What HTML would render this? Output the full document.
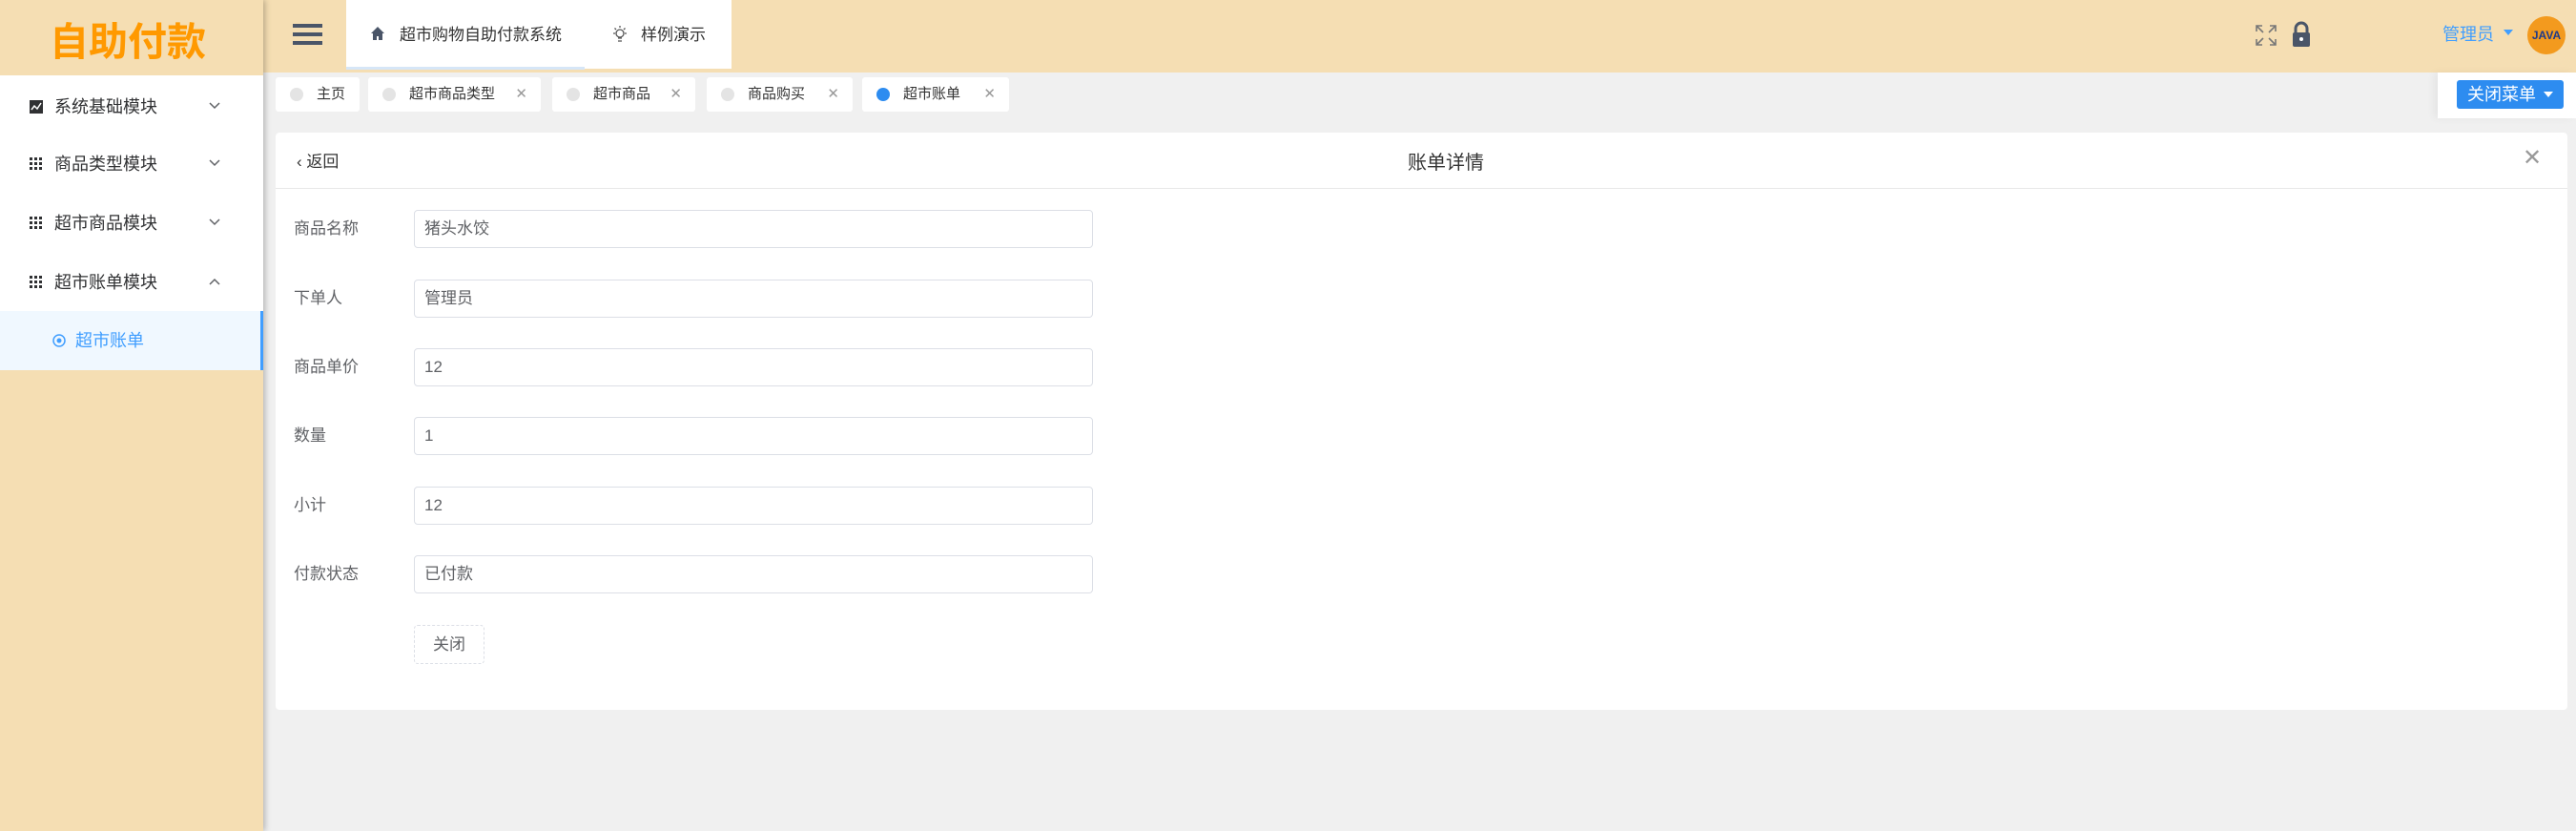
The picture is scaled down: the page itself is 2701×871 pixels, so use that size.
<!DOCTYPE html>
<html><head><meta charset="utf-8"><style>
*{margin:0;padding:0;box-sizing:border-box}
body{width:2701px;height:871px;background:#f0f0f0;font-family:"Liberation Sans","Noto Sans CJK SC",sans-serif;position:relative;overflow:hidden;color:#333}
.abs{position:absolute}
#hdr{left:0;top:0;width:2701px;height:76px;background:#f5deb3}
#side{left:0;top:0;width:276px;height:871px;background:#f5deb3;box-shadow:2px 0 6px rgba(0,0,0,.25);z-index:3}
.logo{left:52px;top:10px;font-size:41px;font-weight:bold;color:#ff9900;letter-spacing:0px;font-family:"WenQuanYi Zen Hei","Noto Sans CJK SC",sans-serif}
.menu{left:0;top:79px;width:276px;height:309px;background:#fff}
.mi{position:absolute;left:0;width:276px;height:62px;font-size:18px;color:#303133;line-height:62px;padding-left:57px}
.mi .ic{position:absolute;left:31px;top:24px;width:14px;height:14px}
.mi .ar{position:absolute;left:219px;top:26px;width:12px;height:8px}
.tabs{left:289px;top:81px;height:36px;background:#fff;border-radius:3px;font-size:15px;color:#333;line-height:36px}
.dot{position:absolute;left:15px;top:11px;width:14px;height:14px;border-radius:50%;background:#e4e4e4}
.x{position:absolute;right:14px;color:#999;font-size:15px}
.card{left:289px;top:139px;width:2403px;height:605px;background:#fff;border-radius:4px}
.lbl{position:absolute;left:19px;font-size:17px;color:#606266;line-height:40px}
.inp{position:absolute;left:145px;width:712px;height:40px;border:1px solid #dcdfe6;border-radius:4px;font-size:17px;color:#606266;line-height:38px;padding-left:10px}
</style></head><body>
<div id="hdr" class="abs"></div>
<div class="abs" style="left:363px;top:0;width:404px;height:72px;background:#fff"></div>
<div class="abs" style="left:363px;top:70px;width:250px;height:3px;background:#d6e6f7"></div>
<div class="abs" style="left:307px;top:25px;width:31px;height:4px;background:#4a5568;box-shadow:0 9px 0 #4a5568,0 18px 0 #4a5568"></div>
<svg class="abs" style="left:388px;top:27px" width="16" height="16" viewBox="0 0 16 16"><path d="M8 1L1 8h2v7h4v-4h2v4h4V8h2z" fill="#4a5568"/></svg>
<div class="abs" style="left:419px;top:22px;font-size:17px;color:#333">超市购物自助付款系统</div>
<svg class="abs" style="left:641px;top:26px" width="18" height="20" viewBox="0 0 18 20" fill="none" stroke="#555" stroke-width="1.3"><circle cx="9" cy="9" r="4"/><path d="M7 14h4M7 17h4M9 1v2M2 9h2M14 9h2M3.5 3.5l1.5 1.5M14.5 3.5L13 5"/></svg>
<div class="abs" style="left:672px;top:22px;font-size:17px;color:#333">样例演示</div>
<svg class="abs" style="left:2364px;top:25px" width="24" height="24" viewBox="0 0 24 24" fill="none" stroke="#777" stroke-width="1.6"><path d="M2 8V2h6M2 2l7 7M16 2h6v6M22 2l-7 7M2 16v6h6M2 22l7-7M22 16v6h-6M22 22l-7-7"/></svg>
<svg class="abs" style="left:2403px;top:22px" width="20" height="28" viewBox="0 0 20 28"><path d="M4 12V8a6 6 0 0 1 12 0v4" fill="none" stroke="#4a5568" stroke-width="3"/><rect x="1" y="12" width="18" height="15" rx="2" fill="#4a5568"/><circle cx="10" cy="19" r="2" fill="#fff"/></svg>
<div class="abs" style="left:2561px;top:22px;font-size:18px;color:#409eff">管理员</div>
<div class="abs" style="left:2625px;top:31px;border:5px solid transparent;border-top:6px solid #409eff"></div>
<div class="abs" style="left:2650px;top:17px;width:40px;height:40px;border-radius:50%;background:#f39a1e;color:#1f3a8a;font-size:12px;font-weight:bold;text-align:center;line-height:40px">JAVA</div>

<div id="side" class="abs">
<div class="abs logo">自助付款</div>
<div class="abs menu">
<div class="mi" style="top:2px"><svg class="ic" viewBox="0 0 14 14"><rect width="14" height="14" fill="#303133"/><path d="M2 10l3-4 3 3 4-6" stroke="#fff" stroke-width="1.5" fill="none"/></svg>系统基础模块<svg class="ar" viewBox="0 0 12 8"><path d="M1 1l5 5 5-5" stroke="#606266" stroke-width="1.5" fill="none"/></svg></div>
<div class="mi" style="top:62px"><svg class="ic" viewBox="0 0 14 14" fill="#303133"><rect x="0" y="0" width="3" height="3"/><rect x="5" y="0" width="3" height="3"/><rect x="10" y="0" width="3" height="3"/><rect x="0" y="5" width="3" height="3"/><rect x="5" y="5" width="3" height="3"/><rect x="10" y="5" width="3" height="3"/><rect x="0" y="10" width="3" height="3"/><rect x="5" y="10" width="3" height="3"/><rect x="10" y="10" width="3" height="3"/></svg>商品类型模块<svg class="ar" viewBox="0 0 12 8"><path d="M1 1l5 5 5-5" stroke="#606266" stroke-width="1.5" fill="none"/></svg></div>
<div class="mi" style="top:124px"><svg class="ic" viewBox="0 0 14 14" fill="#303133"><rect x="0" y="0" width="3" height="3"/><rect x="5" y="0" width="3" height="3"/><rect x="10" y="0" width="3" height="3"/><rect x="0" y="5" width="3" height="3"/><rect x="5" y="5" width="3" height="3"/><rect x="10" y="5" width="3" height="3"/><rect x="0" y="10" width="3" height="3"/><rect x="5" y="10" width="3" height="3"/><rect x="10" y="10" width="3" height="3"/></svg>超市商品模块<svg class="ar" viewBox="0 0 12 8"><path d="M1 1l5 5 5-5" stroke="#606266" stroke-width="1.5" fill="none"/></svg></div>
<div class="mi" style="top:186px"><svg class="ic" viewBox="0 0 14 14" fill="#303133"><rect x="0" y="0" width="3" height="3"/><rect x="5" y="0" width="3" height="3"/><rect x="10" y="0" width="3" height="3"/><rect x="0" y="5" width="3" height="3"/><rect x="5" y="5" width="3" height="3"/><rect x="10" y="5" width="3" height="3"/><rect x="0" y="10" width="3" height="3"/><rect x="5" y="10" width="3" height="3"/><rect x="10" y="10" width="3" height="3"/></svg>超市账单模块<svg class="ar" viewBox="0 0 12 8"><path d="M1 7l5-5 5 5" stroke="#606266" stroke-width="1.5" fill="none"/></svg></div>
<div class="mi" style="top:247px;background:#f0f8ff;border-right:3px solid #409eff;color:#409eff;padding-left:79px"><svg class="ic" style="left:55px" viewBox="0 0 14 14"><circle cx="7" cy="7" r="6" fill="none" stroke="#409eff" stroke-width="1.5"/><circle cx="7" cy="7" r="2.5" fill="#409eff"/></svg>超市账单</div>
</div>
</div>

<div class="abs tabs" style="left:289px;width:88px;padding-left:43px"><span class="dot"></span>主页</div>
<div class="abs tabs" style="left:386px;width:181px;padding-left:43px"><span class="dot"></span>超市商品类型<span class="x">✕</span></div>
<div class="abs tabs" style="left:579px;width:150px;padding-left:43px"><span class="dot"></span>超市商品<span class="x">✕</span></div>
<div class="abs tabs" style="left:741px;width:153px;padding-left:43px"><span class="dot"></span>商品购买<span class="x">✕</span></div>
<div class="abs tabs" style="left:904px;width:154px;padding-left:43px"><span class="dot" style="background:#2d8cf0"></span>超市账单<span class="x">✕</span></div>
<div class="abs" style="left:2556px;top:76px;width:145px;height:48px;background:#fff;box-shadow:-4px 0 8px rgba(0,0,0,.05)"></div>
<div class="abs" style="left:2576px;top:84px;width:112px;height:30px;background:#2d8cf0;border-radius:3px;color:#fff;font-size:18px;line-height:30px;padding-left:11px">关闭菜单<span style="position:absolute;right:11px;top:12px;border:5px solid transparent;border-top:6px solid #fff"></span></div>

<div class="abs card">
<div class="abs" style="left:22px;top:16px;font-size:17px;color:#333">‹ 返回</div>
<div class="abs" style="left:1187px;top:15px;font-size:20px;color:#333">账单详情</div>
<div class="abs" style="left:2356px;top:12px;font-size:24px;color:#999">✕</div>
<div class="abs" style="left:0;top:58px;width:2403px;height:1px;background:#e8e8e8"></div>
<div class="lbl" style="top:81px">商品名称</div><div class="inp" style="top:81px">猪头水饺</div>
<div class="lbl" style="top:154px">下单人</div><div class="inp" style="top:154px">管理员</div>
<div class="lbl" style="top:226px">商品单价</div><div class="inp" style="top:226px">12</div>
<div class="lbl" style="top:298px">数量</div><div class="inp" style="top:298px">1</div>
<div class="lbl" style="top:371px">小计</div><div class="inp" style="top:371px">12</div>
<div class="lbl" style="top:443px">付款状态</div><div class="inp" style="top:443px">已付款</div>
<div class="abs" style="left:145px;top:516px;width:74px;height:41px;border:1px dashed #dcdfe6;border-radius:4px;font-size:17px;color:#606266;text-align:center;line-height:39px">关闭</div>
</div>
</body></html>
